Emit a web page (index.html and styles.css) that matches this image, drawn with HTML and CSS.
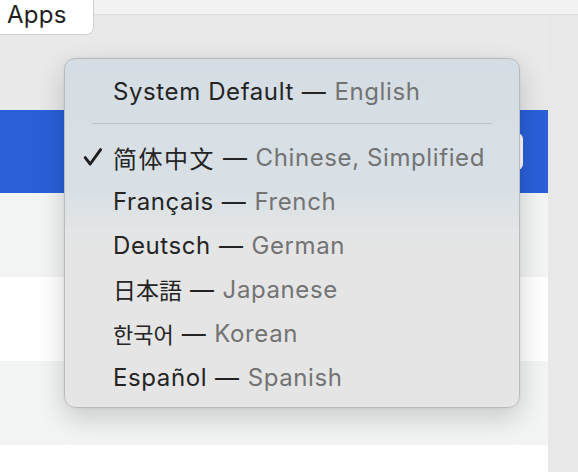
FILE: index.html
```html
<!DOCTYPE html>
<html>
<head>
<meta charset="utf-8">
<link rel="stylesheet" href="styles.css">
</head>
<body>
<div class="screen">
  <div class="topbar">
    <div class="tab">Apps</div>
  </div>
  <div class="main">
    <div class="content">
      <div class="spacer"></div>
      <div class="row selected"><div class="popup-btn"></div></div>
      <div class="row alt"></div>
      <div class="row"></div>
      <div class="row alt"></div>
      <div class="row"></div>
    </div>
    <div class="side"></div>
  </div>
  <div class="menu">
    <div class="item"><span class="check"></span><span class="native">System Default</span><span class="dash">—</span><span class="eng">English</span></div>
    <div class="sep"></div>
    <div class="item"><span class="check"><svg width="20" height="20" viewBox="0 0 20 20"><path d="M2.2 10.6 L7.2 17 L17.6 2.6" fill="none" stroke="#1f1f1f" stroke-width="2.9" stroke-linecap="round" stroke-linejoin="round"/></svg></span><span class="native cjk">简体中文</span><span class="dash">—</span><span class="eng">Chinese, Simplified</span></div>
    <div class="item"><span class="check"></span><span class="native">Français</span><span class="dash">—</span><span class="eng">French</span></div>
    <div class="item"><span class="check"></span><span class="native">Deutsch</span><span class="dash">—</span><span class="eng">German</span></div>
    <div class="item"><span class="check"></span><span class="native cjk-jp">日本語</span><span class="dash">—</span><span class="eng">Japanese</span></div>
    <div class="item"><span class="check"></span><span class="native cjk-kr">한국어</span><span class="dash">—</span><span class="eng">Korean</span></div>
    <div class="item"><span class="check"></span><span class="native">Español</span><span class="dash">—</span><span class="eng">Spanish</span></div>
  </div>
</div>
</body>
</html>
```
FILE: styles.css
```css
html, body {
  margin: 0;
  padding: 0;
}
body {
  font-family: Inter, "Noto Sans CJK SC", sans-serif;
  background: #e9e9e9;
}
.screen {
  position: relative;
  width: 578px;
  height: 472px;
  overflow: hidden;
  background: #e9e9e9;
}
.topbar {
  height: 14px;
  background: #f2f2f2;
  border-bottom: 1px solid #dcdcdc;
}
.tab {
  position: absolute;
  left: -1px;
  top: -1px;
  width: 95px;
  height: 36px;
  box-sizing: border-box;
  background: #ffffff;
  border: 1px solid #cfcfcf;
  border-bottom-right-radius: 8px;
  font-size: 24px;
  letter-spacing: 0.3px;
  color: #1f1f1f;
  padding-left: 7px;
  line-height: 30px;
}
.main {
  display: flex;
  height: 457px;
}
.content {
  width: 548px;
  display: flex;
  flex-direction: column;
}
.side {
  flex: 1;
  background: #e8e8e8;
}
.spacer {
  height: 95px;
  flex: none;
  background: #e9e9e9;
}
.row {
  height: 84px;
  flex: none;
  background: #ffffff;
}
.row.alt {
  background: #f3f4f4;
}
.row.selected {
  height: 83px;
  background: #2a5fd8;
  display: flex;
  justify-content: flex-end;
  align-items: center;
}
.popup-btn {
  width: 70px;
  height: 37px;
  background: #ffffff;
  border-radius: 6px;
  margin-right: 25px;
}
.menu {
  position: absolute;
  left: 64px;
  top: 58px;
  width: 456px;
  height: 350px;
  box-sizing: border-box;
  border-radius: 11px;
  border: 1px solid #b9babb;
  background: linear-gradient(180deg, #d5dde4 0%, #d9e0e5 38%, #e3e5e6 50%, #e5e5e5 56%, #e5e5e5 100%);
  box-shadow: 0 10px 28px rgba(0, 0, 0, 0.18), 0 0 3px rgba(0, 0, 0, 0.06);
  padding-top: 10px;
}
.item {
  height: 44px;
  display: flex;
  align-items: center;
  font-size: 24px;
  letter-spacing: 0.6px;
  color: #242424;
  white-space: nowrap;
}
.check {
  width: 48px;
  height: 44px;
  flex: none;
  box-sizing: border-box;
  padding-left: 18px;
  display: flex;
  align-items: center;
}
.dash {
  margin: 0 8px;
  color: #242424;
}
.eng {
  color: #737373;
}
.cjk { font-family: "Noto Sans CJK SC", sans-serif; letter-spacing: 1.5px; }
.cjk-jp { font-family: "Noto Sans CJK JP", sans-serif; letter-spacing: 0; font-size: 23px; }
.cjk-kr { font-family: "Noto Sans CJK KR", sans-serif; letter-spacing: 0; font-size: 22px; }
.sep {
  height: 1px;
  background: #bfc4c8;
  margin: 10px 27px 11px 27px;
}
```
